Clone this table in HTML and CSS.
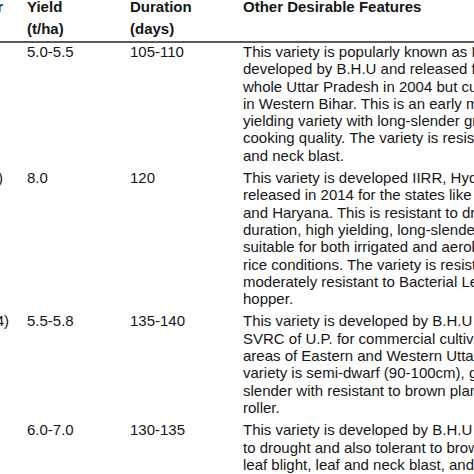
FILE: index.html
```html
<!DOCTYPE html>
<html>
<head>
<meta charset="utf-8">
<link rel="stylesheet" href="styles.css">
</head>
<body>
<table class="varieties">
  <colgroup>
    <col class="c-name">
    <col class="c-yield">
    <col class="c-dur">
    <col class="c-feat">
  </colgroup>
  <thead>
    <tr>
      <th class="name">Cultivar</th>
      <th><span class="l">Yield</span><span class="l">(t/ha)</span></th>
      <th><span class="l">Duration</span><span class="l">(days)</span></th>
      <th><span class="l">Other Desirable Features</span></th>
    </tr>
  </thead>
  <tbody>
    <tr>
      <td class="name"></td>
      <td>5.0-5.5</td>
      <td>105-110</td>
      <td>
        <span class="l">This variety is popularly known as Malviya Dhan 105. It was</span>
        <span class="l">developed by B.H.U and released for the</span>
        <span class="l">whole Uttar Pradesh in 2004 but cultivated also</span>
        <span class="l">in Western Bihar. This is an early maturing, high</span>
        <span class="l">yielding variety with long-slender grains and good</span>
        <span class="l">cooking quality. The variety is resistant to leaf</span>
        <span class="l">and neck blast.</span>
      </td>
    </tr>
    <tr>
      <td class="name n2">(IR64 Drt1)</td>
      <td>8.0</td>
      <td>120</td>
      <td>
        <span class="l">This variety is developed IIRR, Hyderabad and</span>
        <span class="l">released in 2014 for the states like Punjab</span>
        <span class="l">and Haryana. This is resistant to drought, short</span>
        <span class="l">duration, high yielding, long-slender grain type</span>
        <span class="l">suitable for both irrigated and aerobic</span>
        <span class="l">rice conditions. The variety is resistant and</span>
        <span class="l">moderately resistant to Bacterial Leaf Blight and plant</span>
        <span class="l">hopper.</span>
      </td>
    </tr>
    <tr>
      <td class="name n3">(HUR 917-4)</td>
      <td>5.5-5.8</td>
      <td>135-140</td>
      <td>
        <span class="l">This variety is developed by B.H.U and released by</span>
        <span class="l">SVRC of U.P. for commercial cultivation in</span>
        <span class="l">areas of Eastern and Western Uttar Pradesh. This</span>
        <span class="l">variety is semi-dwarf (90-100cm), grains long-</span>
        <span class="l">slender with resistant to brown plant hopper and leaf</span>
        <span class="l">roller.</span>
      </td>
    </tr>
    <tr>
      <td class="name"></td>
      <td>6.0-7.0</td>
      <td>130-135</td>
      <td>
        <span class="l">This variety is developed by B.H.U and is resistant</span>
        <span class="l">to drought and also tolerant to brown spot, bacterial</span>
        <span class="l">leaf blight, leaf and neck blast, and false smut.</span>
      </td>
    </tr>
  </tbody>
</table>
</body>
</html>
```

FILE: styles.css
```css
html, body {
  margin: 0;
  padding: 0;
  background: #ffffff;
  overflow: hidden;
}

body {
  width: 474px;
  height: 474px;
}

.varieties {
  border-collapse: collapse;
  table-layout: fixed;
  width: 900px;
  margin-left: -140px;
  margin-top: -4px;
  font-family: "Liberation Sans", Arial, sans-serif;
  font-size: 15px;
  color: #161616;
}

.c-name { width: 167px; }
.c-yield { width: 103px; }
.c-dur { width: 113px; }
.c-feat { width: 517px; }

.varieties th,
.varieties td {
  text-align: left;
  vertical-align: top;
  padding: 0;
  white-space: nowrap;
}

.varieties th {
  font-weight: bold;
  line-height: 22px;
  padding-bottom: 1px;
  border-bottom: 2px solid #5a5a5a;
}

.varieties td {
  line-height: 17.3px;
  padding-top: 0;
  padding-bottom: 5px;
}

.l {
  display: block;
}

.varieties .name {
  text-align: right;
  padding-right: 24px;
  overflow: hidden;
}

.varieties .n2 {
  padding-right: 24px;
}

.varieties .n3 {
  padding-right: 18px;
}
```
